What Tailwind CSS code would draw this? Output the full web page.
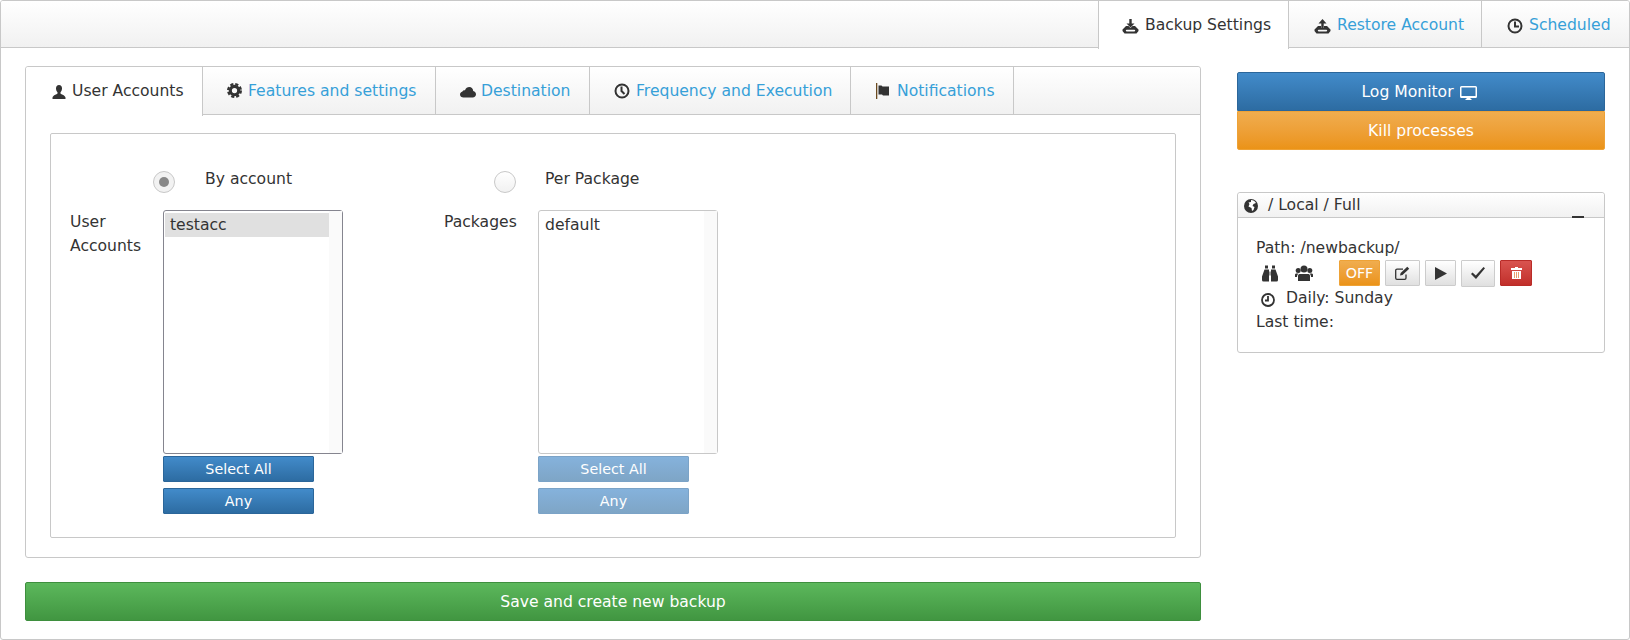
<!DOCTYPE html>
<html>

<head>
    <title>Backup Settings</title>
    <meta charset="UTF-8">
    <script src="https://cdn.jsdelivr.net/npm/@tailwindcss/browser@4"></script>
</head>

<body class="bg-white font-['DejaVu_Sans',sans-serif] text-[15.6px] leading-[24px] text-[#333]">
    <div class="h-[640px] w-[1630px] border border-[#c8c8c8] rounded-[3px] overflow-hidden">
        <!-- top tabs -->
        <div class="flex justify-end h-[47px] border-b border-[#c8c8c8] bg-gradient-to-b from-white to-[#f1f1f1]">
            <div class="flex items-center gap-[6px] w-[191px] h-[48px] pl-[23px] bg-white border-l border-r border-[#c8c8c8]">
                <svg class="w-[17px] h-[16px] mt-[2px]" viewBox="0 0 16 16" fill="#333"><path fill-rule="evenodd" d="M3.500 8H6l2 2 2-2h2.500L16 11.500v1.500l-2 2.500H2L0 13v-1.500zM4 11.800l-.8.8.8.8h8l.8-.8-.8-.8z"/><path d="M6.800 1h2.400v4.500H12L8 9.500l-4-4h2.800z"/></svg>
                <span>Backup Settings</span>
            </div>
            <div class="flex items-center gap-[6px] w-[193px] h-[47px] pl-[25px] border-r border-[#c8c8c8]">
                <svg class="w-[17px] h-[16px] mt-[2px]" viewBox="0 0 16 16" fill="#333"><path fill-rule="evenodd" d="M3.500 8h3v2h3V8h3l3.500 3.500v1.500l-2 2.500H2L0 13v-1.500zM4 11.800l-.8.8.8.8h8l.8-.8-.8-.8z"/><path d="M6.800 10V5.500H4L8 1l4 4.500H9.200V10z"/></svg>
                <span class="text-[#36a0d8]">Restore Account</span>
            </div>
            <div class="flex items-center gap-[6px] w-[147px] h-[47px] pl-[25px]">
                <svg class="w-[16px] h-[16px] mt-[2px]" viewBox="0 0 16 16" fill="none" stroke="#333" stroke-width="2"><circle cx="8" cy="8" r="6.500"/><path d="M8 3.500V8.500H12"/></svg>
                <span class="text-[#36a0d8]">Scheduled</span>
            </div>
        </div>

        <div class="flex">
            <!-- left column -->
            <div class="w-[1176px] ml-[24px] mt-[18px]">
                <div class="h-[492px] border border-[#c8c8c8] rounded-[3px]">
                    <div class="flex h-[48px] border-b border-[#c8c8c8] bg-gradient-to-b from-white to-[#f1f1f1] rounded-t-[3px]">
                        <div class="flex items-center gap-[6px] w-[177px] h-[49px] pl-[26px] pb-[1px] bg-white border-r border-[#c8c8c8] rounded-tl-[3px]">
                            <svg class="w-[14px] h-[15px]" viewBox="0 0 14 15" fill="#333"><path d="M7 1c2 0 3 1.500 3 3.500 0 1.500-.7 3-1.500 3.800v1.200c0 .7 4.500 1.500 5 4V15H.5v-1.500c.5-2.500 5-3.300 5-4V8.300C4.700 7.500 4 6 4 4.500 4 2.500 5 1 7 1z"/></svg>
                            <span>User Accounts</span>
                        </div>
                        <div class="flex items-center gap-[6px] w-[233px] pl-[24px] border-r border-[#c8c8c8]">
                            <svg class="w-[15px] h-[15px]" viewBox="0 0 16 16" fill="none" stroke="#333"><circle cx="8" cy="8" r="4.500" stroke-width="3.400"/><circle cx="8" cy="8" r="6.800" stroke-width="2.400" stroke-dasharray="3.300 2.040"/></svg>
                            <span class="text-[#36a0d8]">Features and settings</span>
                        </div>
                        <div class="flex items-center gap-[5px] w-[154px] pl-[24px] border-r border-[#c8c8c8]">
                            <svg class="w-[16px] h-[12px] mt-[3px]" viewBox="0 0 16 12" fill="#333"><path d="M3.500 11.500C1.500 11.500 0 10.200 0 8.500 0 7 1 6 2.300 5.700 2.800 4.500 3.800 4 5 4.300 5.800 2 7.500 1 9.300 1c2.300 0 3.900 1.800 3.900 4C15 5.300 16 6.700 16 8.300c0 1.800-1.400 3.200-3.300 3.200z"/></svg>
                            <span class="text-[#36a0d8]">Destination</span>
                        </div>
                        <div class="flex items-center gap-[6px] w-[261px] pl-[24px] border-r border-[#c8c8c8]">
                            <svg class="w-[16px] h-[16px]" viewBox="0 0 16 16" fill="none" stroke="#333" stroke-width="2"><circle cx="8" cy="8" r="6.500"/><path d="M7.500 3.500V8l3 3"/></svg>
                            <span class="text-[#36a0d8]">Frequency and Execution</span>
                        </div>
                        <div class="flex items-center gap-[6px] w-[163px] pl-[24px] border-r border-[#c8c8c8]">
                            <svg class="w-[16px] h-[16px]" viewBox="0 0 16 16" fill="#333"><path d="M1 0h1.300v16H1z" fill="#6b4a20"/><path d="M3.500 2.500h3l1 1h6.500v9H8l-1-1H3.500z"/></svg>
                            <span class="text-[#36a0d8]">Notifications</span>
                        </div>
                    </div>

                    <div class="mx-[24px] mt-[18px] h-[405px] border border-[#c8c8c8] rounded-[2px] relative">
                        <!-- radios -->
                        <div class="flex h-[39px] mt-[37px]">
                            <div class="ml-[102px] flex items-center justify-center w-[22px] h-[22px] rounded-full border border-[#c8c8c8] bg-[#f2f2f2]">
                                <span class="block w-[10px] h-[10px] rounded-full bg-[#888]"></span>
                            </div>
                            <span class="w-[200px] ml-[30px] mt-[-4px]">By account</span>
                            <div class="ml-[89px] w-[22px] h-[22px] rounded-full border border-[#c8c8c8] bg-gradient-to-b from-white to-[#f1f1f1]"></div>
                            <span class="ml-[29px] mt-[-4px]">Per Package</span>
                        </div>

                        <div class="flex">
                            <div class="w-[112px] pl-[19px]">User<br>Accounts</div>
                            <div class="w-[180px]">
                                <div class="flex h-[244px] border border-[#85858f] rounded-[3px]">
                                    <div class="flex-1 pl-[1px] pt-[2px]"><div class="h-[24px] pl-[5px] bg-[#e0e0e0]">testacc</div></div>
                                    <div class="w-[13px] bg-[#fafafa]"></div>
                                </div>
                                <button class="block w-[151px] h-[26px] mt-[2px] border border-[#2b669a] rounded-[1px] bg-gradient-to-b from-[#428bca] to-[#2d6ca2] text-white text-[14.3px] leading-[24px]">Select All</button>
                                <button class="block w-[151px] h-[26px] mt-[6px] border border-[#2b669a] rounded-[1px] bg-gradient-to-b from-[#428bca] to-[#2d6ca2] text-white text-[14.3px] leading-[24px]">Any</button>
                            </div>
                            <div class="w-[195px] pl-[101px]">Packages</div>
                            <div class="w-[180px]">
                                <div class="flex h-[244px] border border-[#c8c8c8] rounded-[3px]">
                                    <div class="flex-1 pl-[6px] pt-[2px]"><div class="h-[24px]">default</div></div>
                                    <div class="w-[13px] bg-[#fafafa]"></div>
                                </div>
                                <button class="block w-[151px] h-[26px] mt-[2px] border border-[#7ba3c7] rounded-[1px] bg-gradient-to-b from-[#85b2dc] to-[#7ea5c6] text-white text-[14.3px] leading-[24px]">Select All</button>
                                <button class="block w-[151px] h-[26px] mt-[6px] border border-[#7ba3c7] rounded-[1px] bg-gradient-to-b from-[#85b2dc] to-[#7ea5c6] text-white text-[14.3px] leading-[24px]">Any</button>
                            </div>
                        </div>
                    </div>
                </div>
                <button class="block w-full h-[39px] mt-[24px] border border-[#3e8f3e] rounded-[2px] bg-gradient-to-b from-[#5cb85c] to-[#419641] text-white">Save and create new backup</button>
            </div>

            <!-- right column -->
            <div class="w-[368px] ml-[36px] mt-[24px]">
                <button class="flex items-center justify-center gap-[6px] w-full h-[39px] pr-[4px] border border-[#2b669a] rounded-t-[2px] bg-gradient-to-b from-[#428bca] to-[#2d6ca2] text-white">
                    <span>Log Monitor</span>
                    <svg class="w-[17px] h-[14px] mt-[2px]" viewBox="0 0 17 14" fill="white"><path d="M1.500 0h14A1.500 1.500 0 0 1 17 1.500v9a1.500 1.500 0 0 1-1.500 1.500h-5v1h1v1h-6v-1h1v-1h-5A1.500 1.500 0 0 1 0 10.500v-9A1.500 1.500 0 0 1 1.500 0zM1.500 1.500v8.500h14V1.500z" fill-rule="evenodd"/></svg>
                </button>
                <button class="block w-full h-[39px] border border-[#eea236] rounded-b-[2px] bg-gradient-to-b from-[#f0ad4e] to-[#eb9316] text-white">Kill processes</button>

                <div class="h-[161px] mt-[42px] border border-[#c8c8c8] rounded-[3px]">
                    <div class="relative flex items-center h-[25px] border-b border-[#c8c8c8] bg-gradient-to-b from-white to-[#f1f1f1] rounded-t-[3px]">
                        <svg class="ml-[6px] w-[14px] h-[14px] mt-[2px]" viewBox="0 0 14 14"><circle cx="7" cy="7" r="7" fill="#333"/><path d="M7 1c2 0 4 1 5 3l-2.500 1-1 2 2 1-1 3-1.500 1-.5-3-3-1.500L5.500 5 4.500 3.500 7 3z" fill="#fff"/></svg>
                        <span class="ml-[10px] mt-[-1px]">/ Local / Full</span>
                        <span class="absolute right-[20px] bottom-[-1px] block w-[12px] h-[2px] bg-[#333]"></span>
                    </div>
                    <div class="pl-[18px] pt-[18px]">
                        <div class="h-[24px]">Path: /newbackup/</div>
                        <div class="flex items-center h-[26px]">
                            <svg class="ml-[6px] w-[16px] h-[17px]" viewBox="0 0 16 17" fill="#333"><path d="M3 .5h3v3H3zM10 .5h3v3h-3zM2.500 4.500H7v12H1.500A1.500 1.500 0 0 1 0 15v-3.500zM9 4.500h4.500l2.500 7V15a1.500 1.500 0 0 1-1.500 1.500H9zM7.500 6.500h1v4h-1z"/></svg>
                            <svg class="ml-[17px] w-[18px] h-[16px]" viewBox="0 0 18 16" fill="#333"><circle cx="9" cy="4" r="3.500"/><circle cx="3.200" cy="5.500" r="2.500"/><circle cx="14.800" cy="5.500" r="2.500"/><path d="M4.500 9h9c1 0 1.500 1 1.500 2v5H3v-5c0-1 .5-2 1.500-2zM0 9.500C0 9 .8 8.500 2 8.500h1.500C2.500 9.500 2 10.500 2 12H0zM18 9.500c0-.5-.8-1-2-1h-1.500c1 1 1.500 2 1.500 3.500h2z"/></svg>
                            <button class="ml-[26px] w-[41px] h-[26px] border border-[#eea236] rounded-[1px] bg-gradient-to-b from-[#f0ad4e] to-[#eb9316] text-white text-[14.3px] leading-[24px]">OFF</button>
                            <button class="flex items-center justify-center ml-[5px] w-[35px] h-[26px] border border-[#ccc] rounded-[1px] bg-gradient-to-b from-white to-[#e0e0e0]">
                                <svg class="w-[15px] h-[14px]" viewBox="0 0 15 14" fill="none" stroke="#333" stroke-width="1.300"><path d="M11 8.500V12a1.300 1.300 0 0 1-1.300 1.300H2A1.300 1.300 0 0 1 .7 12V4.500A1.300 1.300 0 0 1 2 3.200h6"/><path d="M5 9.500l.6-2.400L12.300 .8l1.900 1.900L7.500 9z" fill="#333" stroke="none"/></svg>
                            </button>
                            <button class="flex items-center justify-center ml-[5px] w-[31px] h-[26px] border border-[#ccc] rounded-[1px] bg-gradient-to-b from-white to-[#e0e0e0]">
                                <svg class="w-[12px] h-[13px]" viewBox="0 0 12 13" fill="#333"><path d="M0 0l12 6.500L0 13z"/></svg>
                            </button>
                            <button class="flex items-center justify-center ml-[5px] w-[34px] h-[27px] border border-[#ccc] rounded-[1px] bg-gradient-to-b from-white to-[#e0e0e0]">
                                <svg class="w-[14px] h-[12px]" viewBox="0 0 14 12" fill="#333"><path d="M0 7l1.500-1.500 3.300 3L12.500 0 14 1.300 5 12z"/></svg>
                            </button>
                            <button class="flex items-center justify-center ml-[5px] w-[32px] h-[26px] border border-[#b92c28] rounded-[1px] bg-gradient-to-b from-[#d9534f] to-[#c12e2a]">
                                <svg class="w-[11px] h-[12px]" viewBox="0 0 11 12" fill="#fff"><path d="M4 0h3v1h4v2H0V1h4zM1 4h9v8H1z"/><path d="M3 5h1v6H3zM5 5h1v6H5zM7 5h1v6H7z" fill="#e8a070"/></svg>
                            </button>
                        </div>
                        <div class="flex items-center h-[24px]">
                            <svg class="ml-[5px] w-[14px] h-[14px] mt-[3px]" viewBox="0 0 14 14" fill="none" stroke="#333" stroke-width="1.800"><circle cx="7" cy="7" r="6"/><path d="M7 3v4.500H4"/></svg>
                            <span class="ml-[11px]">Daily: Sunday</span>
                        </div>
                        <div class="h-[24px]">Last time:</div>
                    </div>
                </div>
            </div>
        </div>
    </div>
</body>

</html>
